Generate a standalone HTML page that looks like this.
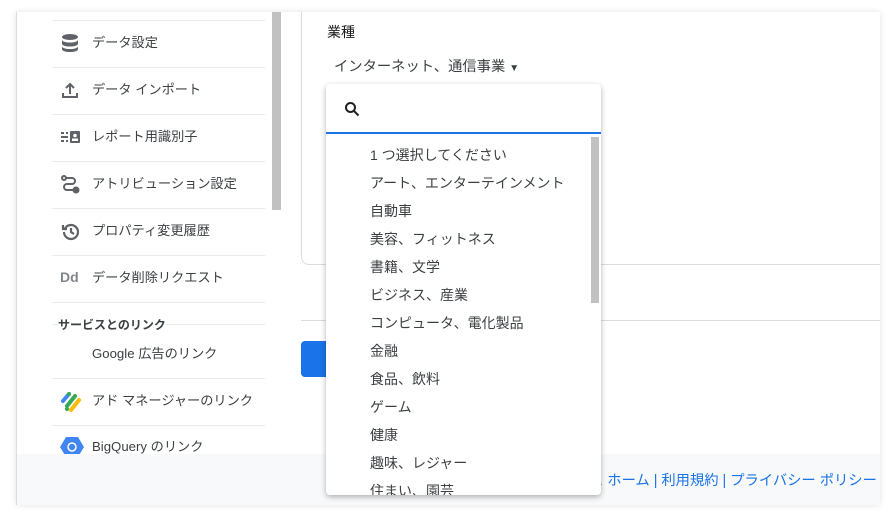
<!DOCTYPE html>
<html><head><meta charset="utf-8"><style>
*{box-sizing:border-box;margin:0;padding:0}
body{width:895px;height:516px;background:#fff;font-family:"Liberation Sans","Noto Sans CJK JP",sans-serif;color:#3c4043;position:relative;overflow:hidden}
.frame{position:absolute;left:16px;top:12px;width:864px;height:493px;background:#fff;box-shadow:0 0 6px rgba(0,0,0,.12);overflow:hidden;border-left:1px solid #ddd}
.sep{position:absolute;left:35px;width:213px;height:1px;background:#ebebeb}
.item{position:absolute;left:75px;font-size:13.2px;color:#3c4043;line-height:20px}
.ic{position:absolute;left:43px}
.footer{position:absolute;left:0;top:442px;width:864px;height:51px;background:#f8f9fa}
.pop{position:absolute;left:326px;top:84px;width:275px;height:411px;background:#fff;border-radius:4px;box-shadow:0 2px 6px rgba(0,0,0,.3);overflow:hidden}
.li{position:absolute;left:44px;font-size:14px;color:#3c4043;line-height:20px}
</style></head><body>
<div class="frame">
 <div style="position:absolute;left:255px;top:0;width:9px;height:198px;background:#c1c1c1"></div>
 <div class="sep" style="top:8px"></div>
 <svg class="ic" style="top:21px" width="20" height="20" viewBox="0 0 20 20"><ellipse cx="10" cy="4" rx="8" ry="3" fill="#5f6368"/><path d="M2 6.5c0 2 3.6 3 8 3s8-1 8-3v4c0 2-3.6 3-8 3s-8-1-8-3z" fill="#5f6368"/><path d="M2 13c0 2 3.6 3 8 3s8-1 8-3v3c0 2-3.6 3-8 3s-8-1-8-3z" fill="#5f6368"/></svg>
 <div class="item" style="top:21px">データ設定</div>
 <div class="sep" style="top:55px"></div>
 <svg class="ic" style="top:68px" width="20" height="20" viewBox="0 0 20 20" fill="none" stroke="#5f6368" stroke-width="2"><path d="M3 13v4h14v-4M10 14V4M6 8l4-4 4 4"/></svg>
 <div class="item" style="top:68px">データ インポート</div>
 <div class="sep" style="top:102px"></div>
 <svg class="ic" style="top:116px" width="22" height="18" viewBox="0 0 22 18"><g fill="#5f6368"><rect x="1" y="4" width="3" height="2"/><rect x="6" y="4" width="2" height="2"/><rect x="1" y="8" width="7" height="2"/><rect x="1" y="12" width="3" height="2"/><rect x="6" y="12" width="2" height="2"/><rect x="10" y="3" width="10" height="12" rx="1"/></g><circle cx="15" cy="7.5" r="1.8" fill="#fff"/><rect x="12" y="10.5" width="6" height="2.5" fill="#fff"/></svg>
 <div class="item" style="top:115px">レポート用識別子</div>
 <div class="sep" style="top:149px"></div>
 <svg class="ic" style="top:162px" width="22" height="20" viewBox="0 0 22 20" fill="none" stroke="#5f6368" stroke-width="2"><circle cx="4" cy="4" r="2"/><path d="M6 4h6a3 3 0 010 6H7a3 3 0 000 6h6"/><circle cx="16" cy="16" r="2.5" fill="#5f6368"/></svg>
 <div class="item" style="top:162px">アトリビューション設定</div>
 <div class="sep" style="top:196px"></div>
 <svg class="ic" style="top:209px" width="22" height="22" viewBox="0 0 22 22" fill="none" stroke="#5f6368" stroke-width="2.2"><path d="M4 11a7 7 0 107-7 7 7 0 00-6 3.5"/><path d="M3 4v4h4" /><path d="M11 7v4l3 2"/></svg>
 <div class="item" style="top:209px">プロパティ変更履歴</div>
 <div class="sep" style="top:243px"></div>
 <div class="ic" style="top:257px;font-weight:bold;font-size:14px;color:#80868b">Dd</div>
 <div class="item" style="top:256px">データ削除リクエスト</div>
 <div class="sep" style="top:290px"></div>
 <div class="sep" style="top:312px"></div>
 <div style="position:absolute;left:41px;top:304px;font-size:12px;font-weight:bold;color:#3c4043;background:#fff">サービスとのリンク</div>
 <div class="item" style="top:332px">Google 広告のリンク</div>
 <div class="sep" style="top:366px"></div>
 <svg class="ic" style="top:379px" width="22" height="22" viewBox="0 0 22 22" stroke-linecap="round" stroke-width="4"><path d="M3 10l6-7" stroke="#4285f4"/><path d="M7 15l8-10" stroke="#34a853"/><path d="M11 19l8-10" stroke="#fbbc04"/><circle cx="9" cy="3" r="2" fill="#34a853"/><circle cx="7" cy="18" r="2" fill="#34a853"/></svg>
 <div class="item" style="top:379px">アド マネージャーのリンク</div>
 <div class="sep" style="top:413px"></div>
 <svg class="ic" style="top:424px" width="24" height="22" viewBox="0 0 24 22"><path d="M6 1h12l6 10-6 10H6L0 11z" fill="#4285f4"/><circle cx="12" cy="11" r="4" fill="none" stroke="#fff" stroke-width="1.5"/></svg>
 <div class="item" style="top:425px">BigQuery のリンク</div>

 <div style="position:absolute;left:284px;top:-10px;width:600px;height:263px;border:1px solid #dadce0;border-radius:8px"></div>
 <div style="position:absolute;left:310px;top:10px;font-size:14px;color:#202124">業種</div>
 <div style="position:absolute;left:317px;top:43px;font-size:14.3px;color:#3c4043">インターネット、通信事業 <span style="font-size:10px">▼</span></div>
 <div style="position:absolute;left:284px;top:308px;width:600px;height:1px;background:#dadce0"></div>
 <div style="position:absolute;left:284px;top:329px;width:60px;height:36px;background:#1a73e8;border-radius:4px"></div>
 <div class="footer"></div>
 <div style="position:absolute;left:572px;top:457px;font-size:14.3px;color:#1a73e8;white-space:nowrap">ス ホーム | 利用規約 | プライバシー ポリシー</div>
</div>
<div class="pop">
 <svg style="position:absolute;left:18px;top:17px" width="16" height="16" viewBox="0 0 16 16" fill="none" stroke="#202124" stroke-width="2"><circle cx="6.5" cy="6.5" r="4.5"/><path d="M10 10l4.5 4.5"/></svg>
 <div style="position:absolute;left:0;top:48px;width:275px;height:2px;background:#1a73e8"></div>
 <div style="position:absolute;left:265px;top:53px;width:8px;height:166px;background:#c1c1c1"></div>
 <div class="li" style="top:61px">1 つ選択してください</div>
 <div class="li" style="top:89px">アート、エンターテインメント</div>
 <div class="li" style="top:117px">自動車</div>
 <div class="li" style="top:145px">美容、フィットネス</div>
 <div class="li" style="top:173px">書籍、文学</div>
 <div class="li" style="top:201px">ビジネス、産業</div>
 <div class="li" style="top:229px">コンピュータ、電化製品</div>
 <div class="li" style="top:257px">金融</div>
 <div class="li" style="top:285px">食品、飲料</div>
 <div class="li" style="top:313px">ゲーム</div>
 <div class="li" style="top:341px">健康</div>
 <div class="li" style="top:369px">趣味、レジャー</div>
 <div class="li" style="top:397px">住まい、園芸</div>
</div>
</body></html>
